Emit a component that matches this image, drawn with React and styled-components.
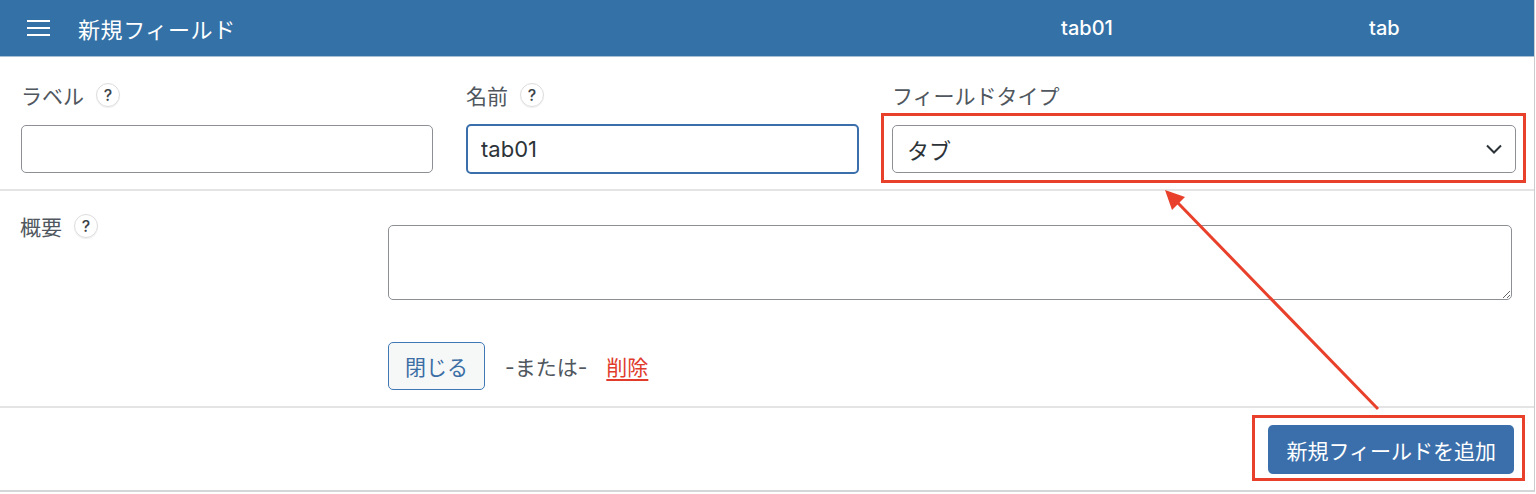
import React from "react";
import styled, { createGlobalStyle } from "styled-components";

const GlobalStyle = createGlobalStyle`
	body {
		margin: 0;
		background: #fff;
		font-family: "Inter", "Noto Sans CJK JP", sans-serif;
		color: #3c434a;
	}
`;

const Page = styled.div`
	position: relative;
	width: 1536px;
	height: 494px;
	overflow: hidden;
`;

const Card = styled.div`
	width: 1534px;
	border-right: 1px solid #c9cbce;
	border-bottom: 2px solid #d4d6d8;
	background: #fff;
`;

const Header = styled.div`
	display: flex;
	align-items: center;
	height: 56px;
	background: #3371a6;
	border-bottom: 1px solid #a9bfd3;
	color: #fff;
`;

const Burger = styled.div`
	display: flex;
	flex-flow: column;
	gap: 4.5px;
	width: 23px;
	margin: 0 28px 0 27px;
	span {
		display: block;
		height: 2.5px;
		background: #fff;
	}
`;

const Title = styled.div`
	flex: 1;
	font-size: 22px;
	font-weight: 400;
	letter-spacing: 0.6px;
`;

const HeadCell = styled.div`
	width: ${(props) => props.w}px;
	font-weight: 500;
	font-size: 20px;
`;

const Row = styled.div`
	display: grid;
	grid-template-columns: ${(props) => props.cols};
	column-gap: ${(props) => props.gap || 0}px;
	padding: ${(props) => props.pad};
	border-bottom: 2px solid #e4e4e4;
`;

const Field = styled.div`
	display: flex;
	flex-flow: column;
	gap: 16px;
`;

const Label = styled.div`
	display: flex;
	align-items: center;
	gap: 12px;
	height: 28px;
	font-size: 21px;
	color: #50575e;
`;

const Help = styled.span`
	display: inline-flex;
	align-items: center;
	justify-content: center;
	width: 22px;
	height: 22px;
	border-radius: 50%;
	border: 1px solid #dcdcde;
	box-shadow: 0 1px 1px rgba(0, 0, 0, 0.07);
	font-size: 16px;
	font-weight: 500;
	color: #3c434a;
`;

const Input = styled.input`
	box-sizing: border-box;
	width: 100%;
	height: ${(props) => (props.focused ? "50px" : "48px")};
	margin-top: ${(props) => (props.focused ? "-1px" : "0")};
	padding: 0 ${(props) => (props.focused ? "13px" : "14px")};
	border: ${(props) =>
		props.focused ? "2.5px solid #3a6fab" : "1.5px solid #8c8f94"};
	border-radius: 5px;
	font-family: inherit;
	font-size: 22px;
	color: #2c3338;
	outline: none;
	background: #fff;
`;

const Highlight = styled.div`
	position: relative;
	&::after {
		content: "";
		position: absolute;
		top: ${(props) => -props.t}px;
		right: ${(props) => -props.r}px;
		bottom: ${(props) => -props.b}px;
		left: ${(props) => -props.l}px;
		border: 3px solid #e8402a;
		pointer-events: none;
	}
`;

const SelectBox = styled.div`
	box-sizing: border-box;
	display: flex;
	align-items: center;
	justify-content: space-between;
	height: 48px;
	padding: 0 12px 0 14px;
	border: 1.5px solid #8c8f94;
	border-radius: 5px;
	font-size: 22px;
	color: #2c3338;
`;

const Side = styled.div`
	padding-top: 1px;
`;

const Main = styled.div`
	display: flex;
	flex-flow: column;
	padding-top: 14px;
`;

const TextArea = styled.textarea`
	box-sizing: border-box;
	width: 100%;
	height: 75px;
	border: 1.5px solid #8c8f94;
	border-radius: 5px;
	resize: vertical;
	font-family: inherit;
	outline: none;
`;

const Actions = styled.div`
	display: flex;
	align-items: center;
	margin-top: 42px;
	font-size: 21px;
`;

const CloseButton = styled.button`
	box-sizing: border-box;
	height: 48px;
	padding: 0 16px;
	border: 1.5px solid #3f78b5;
	border-radius: 5px;
	background: #f6f7f7;
	color: #3b6ea5;
	font-family: inherit;
	font-size: 21px;
`;

const Or = styled.span`
	margin: 0 19px 0 20px;
	color: #50575e;
`;

const DeleteLink = styled.a`
	color: #e03b2b;
	text-decoration: underline;
	text-underline-offset: 4px;
`;

const Footer = styled.div`
	display: flex;
	justify-content: flex-end;
	padding: 17px 20px 16px;
`;

const PrimaryButton = styled.button`
	height: 49px;
	padding: 0 18px;
	border: none;
	border-radius: 5px;
	background: #3b6fab;
	color: #fff;
	font-family: inherit;
	font-size: 21px;
`;

const Arrow = styled.svg`
	position: absolute;
	left: 0;
	top: 0;
	pointer-events: none;
`;

const Chevron = () => (
	<svg width="18" height="12" viewBox="0 0 18 12">
		<path d="M2 2.5 L9 9.5 L16 2.5" fill="none" stroke="#2c3338" strokeWidth="2" />
	</svg>
);

const App = () => {
	return (
		<Page>
			<GlobalStyle />
			<Card>
				<Header>
					<Burger>
						<span />
						<span />
						<span />
					</Burger>
					<Title>新規フィールド</Title>
					<HeadCell w={308}>tab01</HeadCell>
					<HeadCell w={165}>tab</HeadCell>
				</Header>
				<Row cols="412px 393px 624px" gap={33} pad="24px 20px 15px 21px">
					<Field>
						<Label>
							ラベル <Help>?</Help>
						</Label>
						<Input />
					</Field>
					<Field>
						<Label>
							名前 <Help>?</Help>
						</Label>
						<Input focused defaultValue="tab01" />
					</Field>
					<Field>
						<Label>フィールドタイプ</Label>
						<Highlight t={12} r={10} b={10} l={11}>
							<SelectBox>
								タブ
								<Chevron />
							</SelectBox>
						</Highlight>
					</Field>
				</Row>
				<Row cols="368px 1fr" pad="20px 22px 16px 20px">
					<Side>
						<Label>
							概要 <Help>?</Help>
						</Label>
					</Side>
					<Main>
						<TextArea />
						<Actions>
							<CloseButton>閉じる</CloseButton>
							<Or>-または-</Or>
							<DeleteLink>削除</DeleteLink>
						</Actions>
					</Main>
				</Row>
				<Footer>
					<Highlight t={10} r={11} b={7} l={16}>
						<PrimaryButton>新規フィールドを追加</PrimaryButton>
					</Highlight>
				</Footer>
			</Card>
			<Arrow width="1536" height="494" viewBox="0 0 1536 494">
				<line x1="1378" y1="409" x2="1178" y2="203" stroke="#e8402a" strokeWidth="3" />
				<polygon points="1165,190 1185,197 1172,210" fill="#e8402a" />
			</Arrow>
		</Page>
	);
};

export default App;
